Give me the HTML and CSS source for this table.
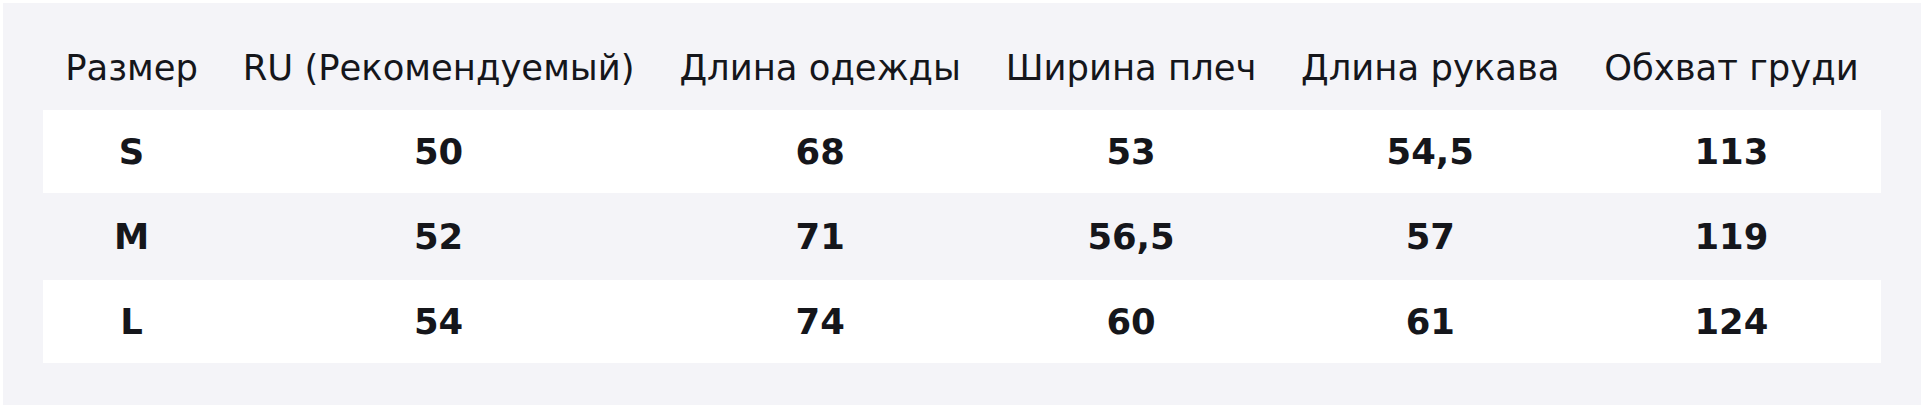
FILE: index.html
```html
<!DOCTYPE html>
<html lang="ru">
<head>
<meta charset="utf-8">
<title>Таблица размеров</title>
<link rel="stylesheet" href="styles.css">
</head>
<body>
<div class="sheet">
  <table class="sizes">
    <thead>
      <tr class="head-row">
        <th>Размер</th>
        <th>RU (Рекомендуемый)</th>
        <th>Длина одежды</th>
        <th>Ширина плеч</th>
        <th>Длина рукава</th>
        <th>Обхват груди</th>
      </tr>
    </thead>
    <tbody>
      <tr class="row row-light">
        <td>S</td><td>50</td><td>68</td><td>53</td><td>54,5</td><td>113</td>
      </tr>
      <tr class="row row-tint row-tall">
        <td>M</td><td>52</td><td>71</td><td>56,5</td><td>57</td><td>119</td>
      </tr>
      <tr class="row row-light">
        <td>L</td><td>54</td><td>74</td><td>60</td><td>61</td><td>124</td>
      </tr>
    </tbody>
  </table>
</div>
</body>
</html>
```

FILE: styles.css
```css
html, body {
  margin: 0;
  padding: 0;
  background: #ffffff;
}

body {
  padding: 3px;
  font-family: "DejaVu Sans", "Noto Sans", sans-serif;
  color: #15161b;
}

.sheet {
  background: #f4f4f8;
  padding: 0 40px 42px;
  height: 402px;
  box-sizing: border-box;
}

.sizes {
  width: 100%;
  border-collapse: collapse;
  border-spacing: 0;
}

.sizes th,
.sizes td {
  padding: 0 22px;
  font-size: 35.4px;
  line-height: 42px;
  white-space: nowrap;
  text-align: center;
}

.sizes th {
  font-weight: 400;
  padding-top: 44px;
  padding-bottom: 21px;
}

.sizes td {
  font-weight: 700;
  height: 83px;
  vertical-align: middle;
  box-sizing: border-box;
}

.row-light {
  background: #ffffff;
}

.row-tint {
  background: #f4f4f8;
}

.row-tall td {
  height: 87px;
}
```
